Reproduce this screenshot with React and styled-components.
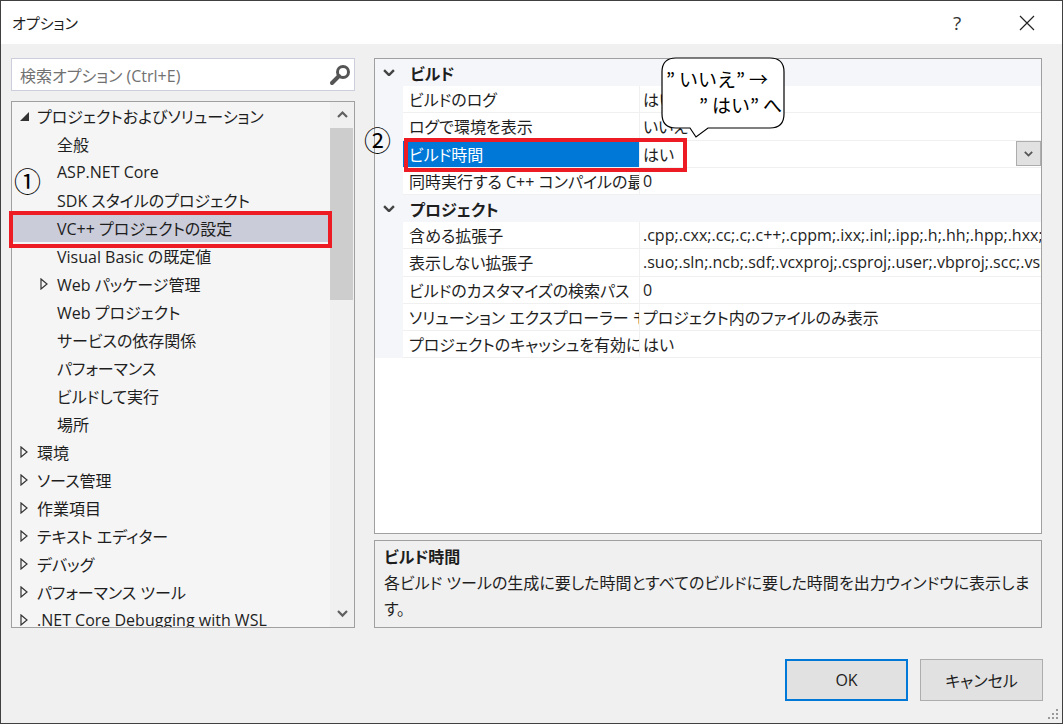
import React from "react";
import styled, { createGlobalStyle } from "styled-components";

const uiFont = `"Open Sans", "Noto Sans CJK JP", sans-serif`;

const GlobalStyle = createGlobalStyle`
  html, body {
    margin: 0;
    padding: 0;
    background: #f0f0f0;
    overflow: hidden;
  }
  body {
    font-family: ${uiFont};
    font-feature-settings: "palt";
    color: #1e1e1e;
  }
`;

const Window = styled.div`
  position: relative;
  width: 1063px;
  height: 724px;
  box-sizing: border-box;
  border: 1px solid #404040;
  background: #f0f0f0;
  font-size: 16px;
`;

const TitleBar = styled.div`
  height: 43px;
  background: #fff;
  display: flex;
  align-items: center;
  padding-left: 11px;
`;

const Title = styled.span`
  flex: 1;
  font-size: 15px;
`;

const TitleButton = styled.div`
  width: 70px;
  height: 43px;
  display: flex;
  align-items: center;
  justify-content: center;
  color: #333;
  font-size: 19px;
`;

const Body = styled.div`
  display: grid;
  grid-template-columns: 344px 668px;
  column-gap: 19px;
  padding: 14px 0 0 10px;
`;

const Column = styled.div`
  display: flex;
  flex-direction: column;
  gap: ${p => p.$gap}px;
`;

const SearchBox = styled.div`
  height: 33px;
  box-sizing: border-box;
  border: 1px solid #cccedb;
  background: #fff;
  display: flex;
  align-items: center;
  padding: 0 3px 0 8px;
`;

const Placeholder = styled.span`
  flex: 1;
  color: #717171;
  font-size: 16px;
`;

const TreePanel = styled.div`
  height: 527px;
  box-sizing: border-box;
  border: 1px solid #a0a0a0;
  background: #f5f5f5;
  display: flex;
  overflow: hidden;
`;

const TreeList = styled.ul`
  flex: 1;
  margin: 0;
  padding: 0;
  list-style: none;
  overflow: hidden;
`;

const TreeRow = styled.li`
  height: 28px;
  display: flex;
  align-items: center;
  padding-left: ${p => 8 + p.$level * 20}px;
  background: ${p => (p.$selected ? "#cbccd9" : "transparent")};
  white-space: nowrap;
`;

const Expander = styled.span`
  width: 17px;
  flex-shrink: 0;
  display: flex;
  align-items: center;
`;

const Scrollbar = styled.div`
  width: 24px;
  background: #f0f0f0;
  display: flex;
  flex-direction: column;
`;

const ScrollArrow = styled.div`
  height: 26px;
  display: flex;
  align-items: center;
  justify-content: center;
`;

const ScrollTrack = styled.div`
  flex: 1;
`;

const ScrollThumb = styled.div`
  height: 172px;
  margin-right: 1px;
  background: #cdcdcd;
`;

const Grid = styled.div`
  height: 476px;
  box-sizing: border-box;
  border: 1px solid #a0a0a0;
  background: #fff;
  overflow: hidden;
`;

const CategoryRow = styled.div`
  height: 27.2px;
  display: flex;
  align-items: center;
  background: #f4f6f9;
  font-weight: 700;
`;

const CategoryToggle = styled.span`
  width: 28px;
  display: flex;
  justify-content: center;
  margin-right: 7px;
`;

const PropRow = styled.div`
  height: 27.2px;
  display: grid;
  grid-template-columns: 28px 237px 1fr;
`;

const Gutter = styled.div`
  background: #f4f6f9;
`;

const NameCell = styled.div`
  box-sizing: border-box;
  border-bottom: 1px solid #f0f0f0;
  border-right: 1px solid #f0f0f0;
  padding-left: 6px;
  display: flex;
  align-items: center;
  overflow: hidden;
  white-space: nowrap;
  background: ${p => (p.$selected ? "#0078d7" : "transparent")};
  color: ${p => (p.$selected ? "#fff" : "inherit")};
`;

const ValueCell = styled.div`
  box-sizing: border-box;
  border-bottom: 1px solid #f0f0f0;
  padding-left: 3px;
  display: flex;
  align-items: center;
  overflow: hidden;
  white-space: nowrap;
`;

const ValueText = styled.span`
  flex: 1;
  overflow: hidden;
`;

const DropButton = styled.div`
  width: 25px;
  height: 25px;
  box-sizing: border-box;
  flex-shrink: 0;
  border: 1px solid #adadad;
  background: #e1e1e1;
  display: flex;
  align-items: center;
  justify-content: center;
`;

const Description = styled.div`
  height: 88px;
  box-sizing: border-box;
  border: 1px solid #a0a0a0;
  padding: 3px 9px;
  line-height: 26px;
`;

const DescTitle = styled.div`
  font-weight: 700;
`;

const DescText = styled.div`
  white-space: nowrap;
`;

const Footer = styled.div`
  display: flex;
  justify-content: flex-end;
  gap: 12px;
  padding: 31px 19px 0 0;
`;

const Button = styled.div`
  width: 123px;
  height: 42px;
  box-sizing: border-box;
  border: ${p => (p.$primary ? "2px solid #0078d7" : "1px solid #adadad")};
  background: #e1e1e1;
  display: flex;
  align-items: center;
  justify-content: center;
  font-size: 16px;
`;

/* annotations lying over the dialog */
const RedBox = styled.div`
  position: absolute;
  left: ${p => p.$x}px;
  top: ${p => p.$y}px;
  width: ${p => p.$w}px;
  height: ${p => p.$h}px;
  box-sizing: border-box;
  border: 4px solid #ed1c24;
  pointer-events: none;
`;

const Marker = styled.span`
  position: absolute;
  left: ${p => p.$x}px;
  top: ${p => p.$y}px;
  font-family: "Noto Sans CJK JP", sans-serif;
  font-size: 27px;
  line-height: 30px;
  color: #000;
`;

const Callout = styled.div`
  position: absolute;
  left: 660px;
  top: 56px;
  width: 126px;
  height: 82px;
`;

const CalloutShape = styled.svg`
  position: absolute;
  inset: 0;
`;

const CalloutText = styled.div`
  position: relative;
  padding: 9px 0 0 5px;
  font-family: "Noto Sans CJK JP", sans-serif;
  font-feature-settings: normal;
  font-size: 19px;
  line-height: 26px;
  color: #000;
  white-space: nowrap;
`;

const CalloutLine = styled.div`
  padding-left: ${p => p.$indent || 0}px;
`;

const Quote = styled.span`
  margin-right: 4px;
`;

const Grip = styled.svg`
  position: absolute;
  right: 3px;
  bottom: 3px;
`;

const Chevron = ({ up, color = "#606060", w = 11 }) => (
  <svg width={w} height={w * 0.65} viewBox="0 0 11 7">
    <polyline
      points={up ? "1,6 5.5,1.5 10,6" : "1,1 5.5,5.5 10,1"}
      fill="none"
      stroke={color}
      strokeWidth="2.2"
    />
  </svg>
);

const OpenArrow = () => (
  <svg width="9" height="9" viewBox="0 0 9 9">
    <polygon points="9,0 9,9 0,9" fill="#333" />
  </svg>
);

const ClosedArrow = () => (
  <svg width="8" height="12" viewBox="0 0 8 12">
    <polygon points="1,1 7,6 1,11" fill="none" stroke="#333" strokeWidth="1.2" />
  </svg>
);

const SearchIcon = () => (
  <svg width="22" height="22" viewBox="0 0 22 22">
    <circle cx="14" cy="8" r="5.5" fill="none" stroke="#555" strokeWidth="3" />
    <line x1="10" y1="12" x2="3" y2="19" stroke="#555" strokeWidth="4" strokeLinecap="round" />
  </svg>
);

const treeItems = [
  { label: "プロジェクトおよびソリューション", level: 0, expander: "open" },
  { label: "全般", level: 1 },
  { label: "ASP.NET Core", level: 1 },
  { label: "SDK スタイルのプロジェクト", level: 1 },
  { label: "VC++ プロジェクトの設定", level: 1, selected: true },
  { label: "Visual Basic の既定値", level: 1 },
  { label: "Web パッケージ管理", level: 1, expander: "closed" },
  { label: "Web プロジェクト", level: 1 },
  { label: "サービスの依存関係", level: 1 },
  { label: "パフォーマンス", level: 1 },
  { label: "ビルドして実行", level: 1 },
  { label: "場所", level: 1 },
  { label: "環境", level: 0, expander: "closed" },
  { label: "ソース管理", level: 0, expander: "closed" },
  { label: "作業項目", level: 0, expander: "closed" },
  { label: "テキスト エディター", level: 0, expander: "closed" },
  { label: "デバッグ", level: 0, expander: "closed" },
  { label: "パフォーマンス ツール", level: 0, expander: "closed" },
  { label: ".NET Core Debugging with WSL", level: 0, expander: "closed" },
];

const categories = [
  {
    name: "ビルド",
    props: [
      { name: "ビルドのログ", value: "はい" },
      { name: "ログで環境を表示", value: "いいえ" },
      { name: "ビルド時間", value: "はい", selected: true },
      { name: "同時実行する C++ コンパイルの最大数", value: "0" },
    ],
  },
  {
    name: "プロジェクト",
    props: [
      { name: "含める拡張子", value: ".cpp;.cxx;.cc;.c;.c++;.cppm;.ixx;.inl;.ipp;.h;.hh;.hpp;.hxx;.hm;.inl;.inc;.xsd" },
      { name: "表示しない拡張子", value: ".suo;.sln;.ncb;.sdf;.vcxproj;.csproj;.user;.vbproj;.scc;.vspscc;.vssscc" },
      { name: "ビルドのカスタマイズの検索パス", value: "0" },
      { name: "ソリューション エクスプローラー モード", value: "プロジェクト内のファイルのみ表示" },
      { name: "プロジェクトのキャッシュを有効にする", value: "はい" },
    ],
  },
];

export default function App() {
  return (
    <>
      <GlobalStyle />
      <Window>
        <TitleBar>
          <Title>オプション</Title>
          <TitleButton>?</TitleButton>
          <TitleButton>
            <svg width="16" height="16" viewBox="0 0 16 16">
              <path d="M1 1 L15 15 M15 1 L1 15" stroke="#222" strokeWidth="1.2" />
            </svg>
          </TitleButton>
        </TitleBar>

        <Body>
          <Column $gap={10}>
            <SearchBox>
              <Placeholder>検索オプション (Ctrl+E)</Placeholder>
              <SearchIcon />
            </SearchBox>
            <TreePanel>
              <TreeList>
                {treeItems.map(item => (
                  <TreeRow key={item.label} $level={item.level} $selected={item.selected}>
                    <Expander>
                      {item.expander === "open" && <OpenArrow />}
                      {item.expander === "closed" && <ClosedArrow />}
                    </Expander>
                    {item.label}
                  </TreeRow>
                ))}
              </TreeList>
              <Scrollbar>
                <ScrollArrow>
                  <Chevron up />
                </ScrollArrow>
                <ScrollTrack>
                  <ScrollThumb />
                </ScrollTrack>
                <ScrollArrow>
                  <Chevron />
                </ScrollArrow>
              </Scrollbar>
            </TreePanel>
          </Column>

          <Column $gap={6}>
            <Grid>
              {categories.map(cat => (
                <React.Fragment key={cat.name}>
                  <CategoryRow>
                    <CategoryToggle>
                      <Chevron color="#444" w={12} />
                    </CategoryToggle>
                    {cat.name}
                  </CategoryRow>
                  {cat.props.map(p => (
                    <PropRow key={p.name}>
                      <Gutter />
                      <NameCell $selected={p.selected}>{p.name}</NameCell>
                      <ValueCell>
                        <ValueText>{p.value}</ValueText>
                        {p.selected && (
                          <DropButton>
                            <Chevron color="#555" w={9} />
                          </DropButton>
                        )}
                      </ValueCell>
                    </PropRow>
                  ))}
                </React.Fragment>
              ))}
            </Grid>
            <Description>
              <DescTitle>ビルド時間</DescTitle>
              <DescText>
                各ビルド ツールの生成に要した時間とすべてのビルドに要した時間を出力ウィンドウに表示しま
              </DescText>
              <DescText>す。</DescText>
            </Description>
          </Column>
        </Body>

        <Footer>
          <Button $primary>OK</Button>
          <Button>キャンセル</Button>
        </Footer>

        <RedBox $x={8} $y={210} $w={323} $h={37} />
        <RedBox $x={403} $y={137} $w={283} $h={34} />
        <Marker $x={13} $y={165}>①</Marker>
        <Marker $x={363} $y={124}>②</Marker>

        <Callout>
          <CalloutShape width="126" height="82" viewBox="0 0 126 82">
            <path
              d="M15 1 H109 Q123 1 123 15 V57 Q123 71 109 71 H47 L35 80 L29 71 H15 Q1 71 1 57 V15 Q1 1 15 1 Z"
              fill="#fff"
              stroke="#000"
              strokeWidth="1.2"
            />
          </CalloutShape>
          <CalloutText>
            <CalloutLine>
              <Quote>”</Quote>いいえ<Quote>”</Quote>→
            </CalloutLine>
            <CalloutLine $indent={33}>
              <Quote>”</Quote>はい<Quote>”</Quote>へ
            </CalloutLine>
          </CalloutText>
        </Callout>

        <Grip width="12" height="12" viewBox="0 0 12 12">
          {[[10, 2], [6, 6], [10, 6], [2, 10], [6, 10], [10, 10]].map(([x, y]) => (
            <rect key={`${x}-${y}`} x={x - 1} y={y - 1} width="2" height="2" fill="#999" />
          ))}
        </Grip>
      </Window>
    </>
  );
}
